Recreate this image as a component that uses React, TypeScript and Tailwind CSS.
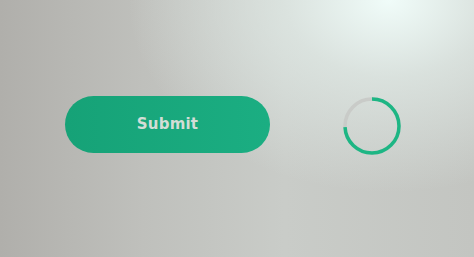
import React from "react";

export default function App() {
  const r = 27;
  const c = 2 * Math.PI * r;
  const green = 0.74;
  return (
    <div className="w-[474px] h-[257px] overflow-hidden bg-[radial-gradient(ellipse_55%_75%_at_82%_0%,rgba(240,252,249,1)_0%,rgba(226,236,232,0.7)_40%,rgba(210,215,212,0)_100%),linear-gradient(to_right,#b0afab_0%,#bfc0bc_30%,#c9ccc8_60%,#c3c5c1_100%)]">
      <div className="flex items-start pl-[65px] pt-[96px] gap-[72px]">
        <button className="w-[205px] h-[57px] rounded-full bg-gradient-to-r from-[#16a277] to-[#1bae82] text-[#d3ddd6] text-[15px] font-bold tracking-[0.2px] [font-family:'DejaVu_Sans',sans-serif]">
          Submit
        </button>
        <svg width="60" height="60" viewBox="0 0 60 60">
          <circle cx="30" cy="30" r={r} fill="none" stroke="#c9cbc8" strokeWidth="3.5" />
          <circle
            cx="30"
            cy="30"
            r={r}
            fill="none"
            stroke="#1db684"
            strokeWidth="3.5"
            strokeDasharray={`${c * green} ${c}`}
            transform="rotate(-90 30 30)"
          />
        </svg>
      </div>
    </div>
  );
}
